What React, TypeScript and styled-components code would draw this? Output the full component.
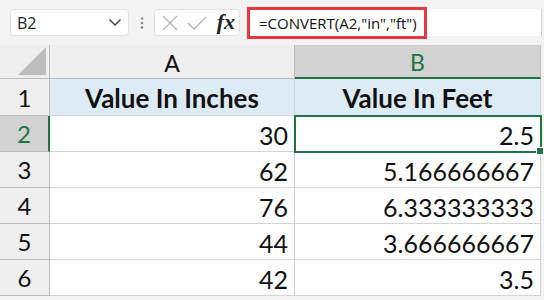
import React from "react";
import styled, { createGlobalStyle } from "styled-components";

const Global = createGlobalStyle`
  html, body { margin: 0; padding: 0; background: #f3f3f3; }
  body { width: 544px; height: 300px; overflow: hidden; font-family: "Open Sans", "Noto Sans", sans-serif; }
`;

const Page = styled.div`
  width: 544px;
  height: 300px;
  background: #f3f3f3;
  display: flex;
  flex-direction: column;
`;

const TopBar = styled.div`
  height: 45px;
  display: flex;
  align-items: center;
  padding: 0 2px 0 10px;
  box-sizing: border-box;
`;

const NameBox = styled.div`
  width: 119px;
  height: 27px;
  box-sizing: border-box;
  background: #fff;
  border: 1px solid #e3e3e3;
  border-radius: 4px;
  display: flex;
  align-items: center;
  justify-content: space-between;
  padding: 0 6px 0 6px;
  font-family: "Open Sans", sans-serif;
  font-size: 16px;
  color: #222;
`;

const Dots = styled.div`
  width: 25px;
  display: flex;
  justify-content: center;
`;

const FxBox = styled.div`
  width: 86px;
  height: 27px;
  box-sizing: border-box;
  background: #fff;
  border: 1px solid #e3e3e3;
  border-radius: 4px;
  display: flex;
  align-items: center;
  justify-content: space-between;
  padding: 0 4px 0 7px;
`;

const FxLabel = styled.span`
  font-family: "Liberation Serif", serif;
  font-style: italic;
  font-weight: 700;
  font-size: 22px;
  color: #222;
  line-height: 1;
  margin-top: -2px;
`;

const FormulaWrap = styled.div`
  flex: 1;
  margin-left: 7px;
  height: 27px;
  background: #fff;
  border-right: 1px solid #d6d6d6;
  display: flex;
  align-items: center;
`;

const Highlight = styled.div`
  width: 180px;
  height: 32px;
  box-sizing: border-box;
  border: 3px solid #e8373f;
  display: flex;
  align-items: center;
  padding-left: 9px;
  font-family: "Open Sans", sans-serif;
  font-size: 15px;
  color: #111;
  white-space: nowrap;
  background: #fff;
`;

const Grid = styled.div`
  display: grid;
  grid-template-columns: 50px 245px 246px;
  grid-template-rows: 34px 37px repeat(5, 36px);
  width: 541px;
  background: #fff;
`;

const Corner = styled.div`
  background: #efefef;
  border-right: 1px solid #bdbdbd;
  border-bottom: 1px solid #bdbdbd;
  box-sizing: border-box;
  display: flex;
  align-items: flex-end;
  justify-content: flex-end;
  padding: 0 3px 3px 0;
`;

const ColHead = styled.div<{ $sel?: boolean }>`
  box-sizing: border-box;
  background: ${(p) => (p.$sel ? "#d2d2d2" : "#efefef")};
  border-right: 1px solid #bdbdbd;
  border-bottom: ${(p) => (p.$sel ? "2px solid #217346" : "1px solid #bdbdbd")};
  display: flex;
  align-items: center;
  justify-content: center;
  font-family: "Lato", sans-serif;
  font-size: 23px;
  color: ${(p) => (p.$sel ? "#217346" : "#111")};
  padding-top: 2px;
`;

const RowHead = styled.div<{ $sel?: boolean }>`
  box-sizing: border-box;
  background: ${(p) => (p.$sel ? "#d2d2d2" : "#efefef")};
  border-right: ${(p) => (p.$sel ? "2px solid #217346" : "1px solid #bdbdbd")};
  border-bottom: 1px solid #bdbdbd;
  display: flex;
  align-items: center;
  justify-content: center;
  font-family: "Lato", sans-serif;
  font-size: 24px;
  color: ${(p) => (p.$sel ? "#217346" : "#111")};
`;

const Cell = styled.div<{ $head?: boolean; $sel?: boolean }>`
  box-sizing: border-box;
  position: relative;
  background: ${(p) => (p.$head ? "#ddebf7" : "#fff")};
  border-right: 1px solid #d4d4d4;
  border-bottom: 1px solid #d4d4d4;
  display: flex;
  align-items: center;
  justify-content: ${(p) => (p.$head ? "center" : "flex-end")};
  padding: 2px 6px 0 6px;
  font-family: "Lato", sans-serif;
  font-size: ${(p) => (p.$head ? "26px" : "25px")};
  font-weight: ${(p) => (p.$head ? 700 : 400)};
  color: #111;
  ${(p) => (p.$sel ? "outline: 2px solid #217346; outline-offset: -1px; z-index: 1;" : "")}
`;

const Handle = styled.div`
  position: absolute;
  right: -4px;
  bottom: -4px;
  width: 6px;
  height: 6px;
  background: #217346;
  border: 1px solid #fff;
`;

const rows = [
  ["30", "2.5"],
  ["62", "5.166666667"],
  ["76", "6.333333333"],
  ["44", "3.666666667"],
  ["42", "3.5"],
];

export default function App() {
  return (
    <Page>
      <Global />
      <TopBar>
        <NameBox>
          <span>B2</span>
          <svg width="14" height="9" viewBox="0 0 14 9">
            <path d="M1.5 1.5 L7 7 L12.5 1.5" fill="none" stroke="#444" strokeWidth="1.5" />
          </svg>
        </NameBox>
        <Dots>
          <svg width="4" height="12" viewBox="0 0 4 12">
            <circle cx="2" cy="1.5" r="1.3" fill="#8a8a8a" />
            <circle cx="2" cy="6" r="1.3" fill="#8a8a8a" />
            <circle cx="2" cy="10.5" r="1.3" fill="#8a8a8a" />
          </svg>
        </Dots>
        <FxBox>
          <svg width="16" height="16" viewBox="0 0 16 16">
            <path d="M1 1 L15 15 M15 1 L1 15" stroke="#b5b5b5" strokeWidth="1.3" fill="none" />
          </svg>
          <svg width="20" height="16" viewBox="0 0 20 16">
            <path d="M1 8 L7 14 L19 2" stroke="#b5b5b5" strokeWidth="1.3" fill="none" />
          </svg>
          <FxLabel>fx</FxLabel>
        </FxBox>
        <FormulaWrap>
          <Highlight>=CONVERT(A2,"in","ft")</Highlight>
        </FormulaWrap>
      </TopBar>
      <Grid>
        <Corner>
          <svg width="28" height="28" viewBox="0 0 28 28">
            <path d="M28 0 L28 28 L0 28 Z" fill="#bdbdbd" />
          </svg>
        </Corner>
        <ColHead>A</ColHead>
        <ColHead $sel>B</ColHead>
        <RowHead>1</RowHead>
        <Cell $head>Value In Inches</Cell>
        <Cell $head>Value In Feet</Cell>
        {rows.map((r, i) => (
          <React.Fragment key={i}>
            <RowHead $sel={i === 0}>{i + 2}</RowHead>
            <Cell>{r[0]}</Cell>
            <Cell $sel={i === 0}>
              {r[1]}
              {i === 0 && <Handle />}
            </Cell>
          </React.Fragment>
        ))}
      </Grid>
    </Page>
  );
}
